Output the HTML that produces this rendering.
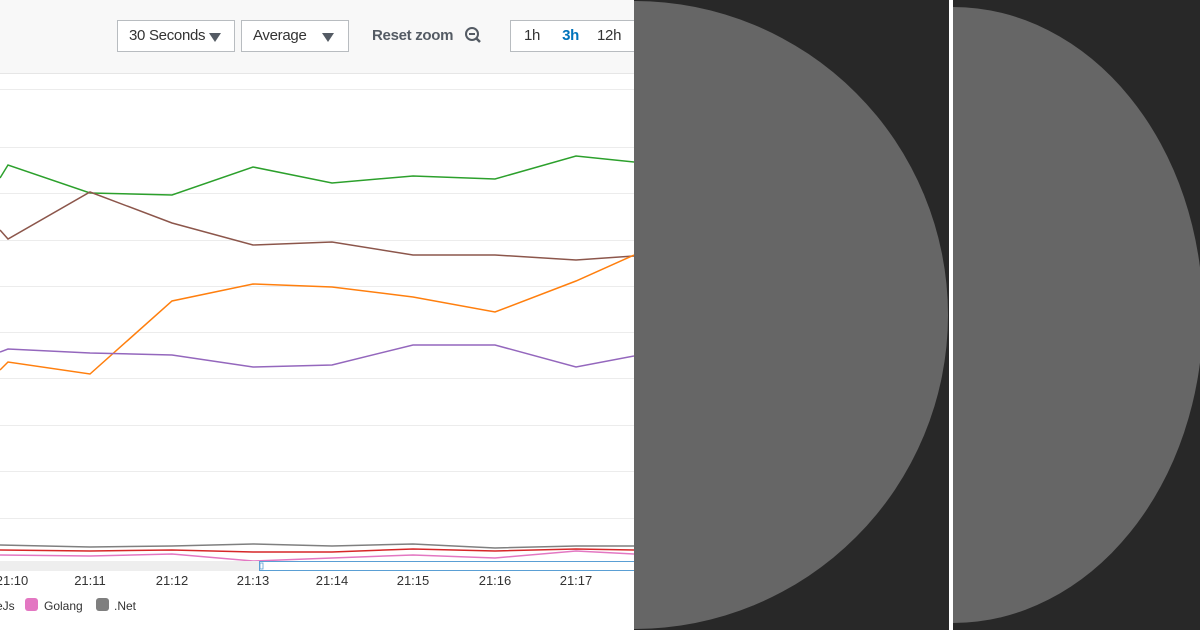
<!DOCTYPE html>
<html><head><style>
html,body{margin:0;padding:0;width:1200px;height:630px;overflow:hidden;background:#fff;font-family:"Liberation Sans",sans-serif}
#left{position:absolute;left:0;top:0;width:634px;height:630px;background:#fff;overflow:hidden}
.top{position:absolute;left:0;top:0;width:634px;height:73px;background:#f8f8f8;border-bottom:1px solid #e6e6e6}
.btn{position:absolute;top:20px;height:32px;border:1px solid #b8bcc0;background:#fff;box-sizing:border-box;font-size:15px;color:#333;line-height:30px;padding-left:11px;letter-spacing:-0.3px}
.tri{position:absolute;top:12px;width:0;height:0;border-left:6px solid transparent;border-right:6px solid transparent;border-top:9px solid #545b64}
#right{position:absolute;left:634px;top:0;width:566px;height:630px;background:#282828;overflow:hidden}
</style></head><body>
<div id="left">
<div class="top"></div>
<div class="btn" style="left:117px;width:118px">30 Seconds<span class="tri" style="left:91px"></span></div>
<div class="btn" style="left:241px;width:108px">Average<span class="tri" style="left:80px"></span></div>
<div style="position:absolute;left:372px;top:27px;font-size:15px;font-weight:bold;color:#545b64;letter-spacing:-0.3px">Reset zoom</div>
<svg style="position:absolute;left:464px;top:26px" width="18" height="18"><circle cx="8" cy="8" r="6" fill="none" stroke="#545b64" stroke-width="2"/><line x1="5" y1="8" x2="11" y2="8" stroke="#545b64" stroke-width="2"/><line x1="12" y1="12" x2="16" y2="16" stroke="#545b64" stroke-width="2.5"/></svg>
<div class="btn" style="left:510px;width:140px;padding-left:13px">1h<b style="color:#0073bb;margin-left:22px">3h</b><span style="margin-left:18px">12h</span></div>
<svg style="position:absolute;left:0;top:0" width="634" height="630">
<g stroke="#ececec" stroke-width="1">
<line x1="0" y1="89.5" x2="634" y2="89.5"/><line x1="0" y1="147.5" x2="634" y2="147.5"/><line x1="0" y1="193.5" x2="634" y2="193.5"/><line x1="0" y1="240.5" x2="634" y2="240.5"/><line x1="0" y1="286.5" x2="634" y2="286.5"/><line x1="0" y1="332.5" x2="634" y2="332.5"/><line x1="0" y1="378.5" x2="634" y2="378.5"/><line x1="0" y1="425.5" x2="634" y2="425.5"/><line x1="0" y1="471.5" x2="634" y2="471.5"/><line x1="0" y1="518.5" x2="634" y2="518.5"/>
</g>
<g fill="none" stroke-width="1.5">
<polyline stroke="#2ca02c" points="0,178 8,165 90,193 172,195 253,167 332,183 413,176 495,179 576,156 634,162"/>
<polyline stroke="#8c564b" points="0,230 8,239 90,192 172,223 253,245 332,242 413,255 495,255 576,260 634,256"/>
<polyline stroke="#ff7f0e" points="0,370 8,362 90,374 172,301 253,284 332,287 413,297 495,312 576,281 634,255"/>
<polyline stroke="#9467bd" points="0,352 8,349 90,353 172,355 253,367 332,365 413,345 495,345 576,367 634,356"/>
<polyline stroke="#7f7f7f" points="0,545 90,547 172,546 253,544 332,546 413,544 495,548 576,546 634,546"/>
<polyline stroke="#d62728" points="0,550 90,551 172,550 253,552 332,552 413,549 495,551 576,549 634,550"/>
<polyline stroke="#e377c2" points="0,555 90,556 172,554 253,561 332,558 413,555 495,558 576,551 634,554"/>
</g>
<rect x="0" y="561" width="634" height="10" fill="#eee"/>
<rect x="259.5" y="561.5" width="380" height="9" fill="#fff" stroke="#5a9fd4"/>
<rect x="260" y="563" width="3" height="6" fill="none" stroke="#5a9fd4" stroke-width="0.8"/>
<g font-size="13" fill="#333" font-family="Liberation Sans">
<text x="12" y="585" text-anchor="middle">21:10</text><text x="90" y="585" text-anchor="middle">21:11</text><text x="172" y="585" text-anchor="middle">21:12</text><text x="253" y="585" text-anchor="middle">21:13</text><text x="332" y="585" text-anchor="middle">21:14</text><text x="413" y="585" text-anchor="middle">21:15</text><text x="495" y="585" text-anchor="middle">21:16</text><text x="576" y="585" text-anchor="middle">21:17</text>
<text x="-4" y="610" font-size="12">eJs</text>
<rect x="25" y="598" width="13" height="13" rx="3" fill="#e377c2"/><text x="44" y="610" font-size="12">Golang</text>
<rect x="96" y="598" width="13" height="13" rx="3" fill="#7f7f7f"/><text x="114" y="610" font-size="12">.Net</text>
</g>
</svg>
</div>
<div id="right">
<svg width="566" height="630">
<defs><clipPath id="c"><rect x="319" y="0" width="247" height="630"/></clipPath></defs>
<circle cx="0" cy="315" r="314" fill="#666"/>
<ellipse cx="319" cy="315" rx="250" ry="308" fill="#666" clip-path="url(#c)"/>
<rect x="315" y="0" width="4" height="630" fill="#fff"/>
</svg>
</div>
</body></html>
